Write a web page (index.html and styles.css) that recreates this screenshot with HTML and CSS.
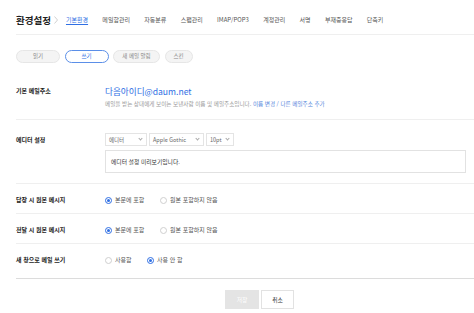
FILE: index.html
```html
<!DOCTYPE html>
<html lang="ko">
<head>
  <meta charset="UTF-8" />
  <meta name="viewport" content="width=device-width, initial-scale=1.0" />
  <title>환경설정</title>
  <link rel="stylesheet" href="styles.css">
</head>
<body>
  <div class="page">
    <header class="top">
      <h1>환경설정</h1>
      <svg class="crumb" width="4" height="8" viewBox="0 0 4 8" aria-hidden="true">
        <polyline points="0.5,0.5 3.5,4 0.5,7.5" fill="none" stroke="#c4c4c4" stroke-width="0.8" />
      </svg>
      <nav class="tabs">
        <a class="active" href="#">기본환경</a>
        <a href="#">메일함관리</a>
        <a href="#">자동분류</a>
        <a href="#">스팸관리</a>
        <a href="#">IMAP/POP3</a>
        <a href="#">계정관리</a>
        <a href="#">서명</a>
        <a href="#">부재중응답</a>
        <a href="#">단축키</a>
      </nav>
    </header>

    <div class="pills">
      <button class="pill">읽기</button>
      <button class="pill on">쓰기</button>
      <button class="pill">새 메일 알림</button>
      <button class="pill small">스킨</button>
    </div>

    <section class="settings">
      <div class="row first">
        <div class="label">기본 메일주소</div>
        <div class="value">
          <div class="email">다음아이디@daum.net</div>
          <p class="desc">메일을 받는 상대에게 보이는 보낸사람 이름 및 메일주소입니다. <a href="#">이름 변경 / 다른 메일주소 추가</a></p>
        </div>
      </div>

      <div class="row editor">
        <div class="label">에디터 설정</div>
        <div class="value">
          <div class="selects">
            <div class="select w1">에디터<span class="arrow"></span></div>
            <div class="select w2">Apple Gothic<span class="arrow"></span></div>
            <div class="select w3">10pt<span class="arrow"></span></div>
          </div>
          <div class="preview">에디터 설정 미리보기입니다.</div>
        </div>
      </div>

      <div class="row">
        <div class="label">답장 시 원본 메시지</div>
        <div class="value radios">
          <label class="radio wide checked"><span class="dot"></span>본문에 포함</label>
          <label class="radio"><span class="dot"></span>원본 포함하지 않음</label>
        </div>
      </div>

      <div class="row">
        <div class="label">전달 시 원본 메시지</div>
        <div class="value radios">
          <label class="radio wide checked"><span class="dot"></span>본문에 포함</label>
          <label class="radio"><span class="dot"></span>원본 포함하지 않음</label>
        </div>
      </div>

      <div class="row last">
        <div class="label">새 창으로 메일 쓰기</div>
        <div class="value radios">
          <label class="radio narrow"><span class="dot"></span>사용함</label>
          <label class="radio checked"><span class="dot"></span>사용 안 함</label>
        </div>
      </div>
    </section>

    <div class="actions">
      <button class="btn save" disabled>저장</button>
      <button class="btn">취소</button>
    </div>
  </div>
</body>
</html>
```

FILE: styles.css
```css
:root {
  --blue: #2f6fe4;
  --line: #efefef;
  --text: #222;
  --muted: #999;
}
* {
  box-sizing: border-box;
  margin: 0;
  padding: 0;
}
body {
  background: #fff;
  color: var(--text);
  font-family: "Noto Sans CJK KR", "Noto Sans", sans-serif;
  overflow: hidden;
}
a {
  text-decoration: none;
}
.page {
  padding-left: 16px;
}
.top {
  display: flex;
  align-items: center;
  height: 35px;
  padding-top: 5px;
  border-bottom: 1px solid var(--line);
}
.top h1 {
  font-size: 9.5px;
  font-weight: 700;
  line-height: 12px;
  margin-right: 3px;
}
.crumb {
  margin-right: 8px;
}
.tabs {
  display: flex;
  gap: 14.3px;
}
.tabs a {
  font-size: 6px;
  line-height: 10px;
  color: #555;
  white-space: nowrap;
}
.tabs a.active {
  color: var(--blue);
  text-decoration: underline;
  text-underline-offset: 2px;
  text-decoration-thickness: 0.7px;
}
.pills {
  display: flex;
  gap: 4.5px;
  margin-top: 15px;
}
.pill {
  width: 44px;
  height: 13px;
  border: 1px solid #e6e6e6;
  border-radius: 7px;
  background: #f4f4f4;
  color: #888;
  font-family: inherit;
  font-size: 5.5px;
  line-height: 11px;
}
.pill:nth-child(3) {
  width: 47px;
}
.pill.small {
  width: 28px;
}
.pill.on {
  background: #fff;
  border-color: #5b8fe8;
  color: var(--blue);
}
.settings {
  margin-top: 10px;
}
.row {
  display: grid;
  grid-template-columns: 89px 1fr;
  padding: 11px 0 8px;
  border-bottom: 1px solid var(--line);
}
.label {
  font-size: 6px;
  font-weight: 700;
  line-height: 10px;
  white-space: nowrap;
}
.row.first {
  padding: 12px 0 11px;
}
.row.first .label {
  line-height: 12px;
}
.email {
  font-size: 8.6px;
  line-height: 12px;
  color: var(--blue);
}
.desc {
  margin-top: 3px;
  font-size: 5.6px;
  line-height: 8px;
  color: var(--muted);
  white-space: nowrap;
}
.desc a {
  color: #5586dc;
}
.row.editor {
  padding: 13px 0 10px;
}
.row.editor .label {
  line-height: 13px;
}
.selects {
  display: flex;
  gap: 2px;
}
.select {
  display: flex;
  align-items: center;
  justify-content: space-between;
  height: 13px;
  padding: 0 4px 0 3px;
  border: 1px solid #e4e4e4;
  font-size: 5.5px;
  color: #666;
}
.select.w1 {
  width: 42px;
}
.select.w2 {
  width: 55px;
}
.select.w3 {
  width: 28px;
}
.arrow {
  width: 3px;
  height: 3px;
  border-right: 0.6px solid #aaa;
  border-bottom: 0.6px solid #aaa;
  transform: translateY(-1px) rotate(45deg);
}
.preview {
  width: 361px;
  height: 23px;
  margin-top: 4px;
  padding-left: 5px;
  border: 1px solid #e2e2e2;
  display: flex;
  align-items: center;
  font-size: 5.8px;
  color: #333;
}
.radios {
  display: flex;
}
.radio {
  display: flex;
  align-items: center;
  gap: 3px;
  font-size: 6px;
  line-height: 10px;
  color: #555;
  white-space: nowrap;
}
.radio.wide {
  width: 55px;
}
.radio.narrow {
  width: 42px;
}
.dot {
  width: 7px;
  height: 7px;
  border: 0.7px solid #cfcfcf;
  border-radius: 50%;
  display: flex;
  align-items: center;
  justify-content: center;
}
.radio.checked .dot {
  border-color: var(--blue);
}
.radio.checked .dot::after {
  content: "";
  width: 3px;
  height: 3px;
  border-radius: 50%;
  background: var(--blue);
}
.row.last {
  padding: 11px 0 13px;
  border-bottom-color: #dcdcdc;
}
.actions {
  display: flex;
  gap: 2px;
  padding: 11px 0 0 209px;
}
.btn {
  width: 33px;
  height: 19px;
  border: 1px solid #e2e2e2;
  background: #fff;
  color: #333;
  font-family: inherit;
  font-size: 5.8px;
}
.btn.save {
  width: 34px;
  border-color: #e4e4e4;
  background: #e4e4e4;
  color: #fff;
}
```
